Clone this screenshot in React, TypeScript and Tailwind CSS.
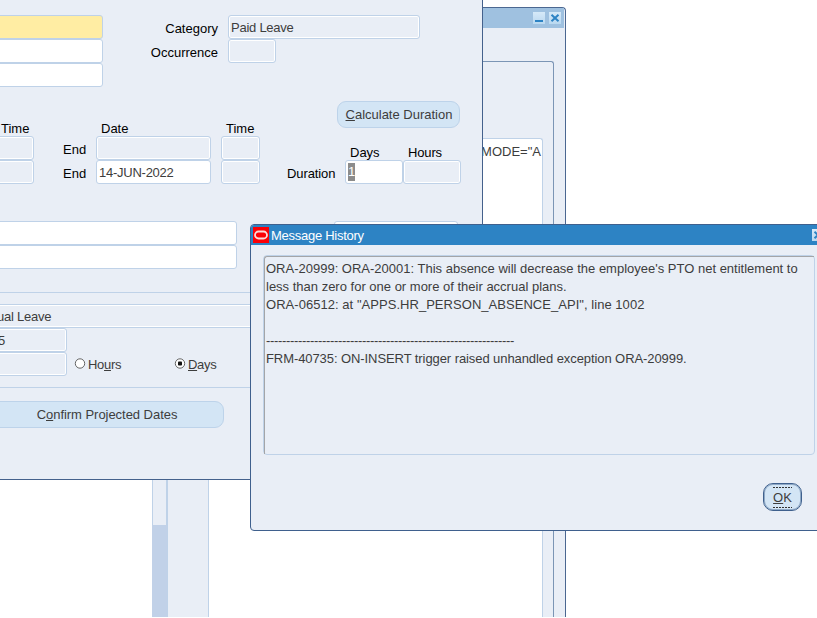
import type { ReactNode } from 'react';
import clsx from 'clsx';

interface FieldProps {
  className?: string;
  variant?: 'readonly' | 'editable' | 'required';
  children?: ReactNode;
}

const fieldStyles = {
  readonly: 'bg-[#e9eef6] shadow-[inset_0_0_0_1px_#fff]',
  editable: 'bg-white',
  required: 'bg-[#ffeda3]',
};

// Oracle Forms text item. Read only items show the canvas colour inside a white bevel.
function Field({ className, variant = 'readonly', children }: FieldProps) {
  return (
    <div
      className={clsx(
        'flex h-6 shrink-0 items-center rounded-[3px] border border-[#bfd2e8] pl-[2px] pt-px tracking-[-0.25px] text-[#3d3d3d]',
        fieldStyles[variant],
        className
      )}
    >
      {children}
    </div>
  );
}

function WindowButton({ type }: { type: 'minimize' | 'close' }) {
  return (
    <span className="flex h-3 w-3 shrink-0 items-center justify-center bg-gradient-to-b from-[#d6e9f8] to-[#b9d8f0]">
      <svg width="12" height="12" viewBox="0 0 12 12" fill="none" stroke="#2d83c4">
        {type === 'minimize' ? (
          <path d="M2 9h8" strokeWidth="2" />
        ) : (
          <path d="M2.5 2.8l7 6.4M9.5 2.8l-7 6.4M4.5 6h3" strokeWidth="2" />
        )}
      </svg>
    </span>
  );
}

function Radio({ checked = false }: { checked?: boolean }) {
  return (
    <svg width="11" height="11" viewBox="0.5 0.5 11 11" className="-ml-px mr-px shrink-0 overflow-visible">
      <circle cx="6.5" cy="6" r="4.7" fill="#fff" stroke="#555" strokeWidth="0.9" />
      {checked && <rect x="4.5" y="4" width="4" height="4" rx="0.8" fill="#111" />}
    </svg>
  );
}

function FocusLine() {
  return (
    <svg width="19" height="1" viewBox="0 0 19 1" className="block">
      <path d="M0 .5h19" stroke="#333" strokeDasharray="2 1" />
    </svg>
  );
}

function BackgroundWindow() {
  return (
    <div className="absolute left-0 top-[7px] flex h-[630px] w-[566px] flex-col rounded-tr-[4px] border-r border-t border-[#4b6791] bg-[#e9eef6]">
      <div className="mr-px flex h-5 shrink-0 items-center justify-end gap-1 bg-[#9fc1e0] pr-[3px]">
        <WindowButton type="minimize" />
        <WindowButton type="close" />
      </div>
      <div className="flex flex-1">
        <div className="w-[152px] bg-white" />
        <div className="flex w-4 flex-col border-l border-r-2 border-[#bfd2e8]">
          <div className="h-[497px]" />
          <div className="-mx-px flex-1 bg-[#c1d1e8]" />
        </div>
        <div className="mt-[33px] w-[386px] rounded-tr-[3px] border-r border-t border-[#7b95b5] pl-10 pr-[10px] pt-[76px]">
          <div className="h-full rounded-tr-[3px] border-l border-r border-t border-[#bfd2e8] bg-white pr-px pt-1 text-right leading-[18px] text-[#3d3d3d]">
            MODE="A
          </div>
        </div>
      </div>
    </div>
  );
}

function AbsenceForm() {
  return (
    <div className="absolute left-0 top-0 h-[480px] w-[483px] border-b border-r border-[#44618c] bg-[#e9eef6] pt-[15px] text-black">
      <div className="flex">
        <div className="-ml-1 w-[107px]">
          <Field variant="required" />
          <Field variant="editable" />
          <Field variant="editable" />
        </div>
        <div className="w-[115px] pt-[2px] text-right leading-6">
          <div>Category</div>
          <div>Occurrence</div>
        </div>
        <div className="ml-[10px]">
          <Field className="w-48">Paid Leave</Field>
          <Field className="w-12" />
        </div>
      </div>

      <div className="flex h-[97px]">
        <div className="-ml-1 w-[38px] pt-[33px]">
          <div className="h-4 pl-[5px] pt-px leading-4">Time</div>
          <Field />
          <Field />
        </div>
        <div className="ml-[29px] w-[33px] pt-[51px] leading-6">
          <div>End</div>
          <div>End</div>
        </div>
        <div className="w-[115px] pt-[33px]">
          <div className="h-4 pl-[5px] pt-px leading-4">Date</div>
          <Field />
          <Field variant="editable">14-JUN-2022</Field>
        </div>
        <div className="ml-[10px] w-[39px] pt-[33px]">
          <div className="h-4 pl-[5px] pt-px leading-4">Time</div>
          <Field />
          <Field />
        </div>
        <div className="ml-[27px] w-[58px] pt-[75px] leading-6 tracking-[-0.1px]">Duration</div>
        <div className="w-[124px] pt-[14px]">
          <button className="-ml-2 block h-[27px] w-[123px] rounded-[9px] border border-[#bdd3ea] bg-[#d3e5f5] pl-px leading-[25px] text-[#3d3d3d]">
            <u>C</u>alculate Duration
          </button>
          <div className="mt-4 flex h-4 pt-px leading-4">
            <span className="w-[58px] pl-[5px]">Days</span>
            <span className="pl-[5px] tracking-[-0.15px]">Hours</span>
          </div>
          <div className="flex">
            <Field className="w-[58px]" variant="editable">
              <span className="-mt-px h-[18px] w-[7px] bg-[#8c8c8c] leading-[18px] text-white">1</span>
            </Field>
            <Field className="w-[58px]" />
          </div>
        </div>
      </div>

      <div className="mt-[37px] flex">
        <div className="-ml-1 w-[241px]">
          <Field variant="editable" />
          <Field variant="editable" />
        </div>
        <Field className="ml-[97px] w-[124px]" variant="editable" />
      </div>

      <div className="mt-[23px] h-24 border-y border-[#bfd2e8] pt-[11px]">
        <Field className="-ml-1 w-[420px]">
          <span className="-ml-[2px]">ual Leave</span>
        </Field>
        <div className="flex">
          <div className="-ml-1 w-[71px]">
            <Field>
              <span className="-ml-px">5</span>
            </Field>
            <Field />
          </div>
          <div className="flex gap-[54px] pl-2 pt-[30px] leading-[14px] tracking-[-0.3px] text-[#3d3d3d]">
            <div className="flex w-[46px] gap-[2px]">
              <Radio />
              <span>
                Ho<u>u</u>rs
              </span>
            </div>
            <div className="flex gap-[2px]">
              <Radio checked />
              <span>
                <u>D</u>ays
              </span>
            </div>
          </div>
        </div>
      </div>

      <button className="-ml-[10px] mt-[13px] block h-[27px] w-[234px] rounded-[9px] border border-[#bdd3ea] bg-[#d3e5f5] leading-[25px] tracking-[-0.04px] text-[#3d3d3d]">
        C<u>o</u>nfirm Projected Dates
      </button>
    </div>
  );
}

const messageLines = [
  { text: "ORA-20999: ORA-20001: This absence will decrease the employee's PTO net entitlement to" },
  { text: 'less than zero for one or more of their accrual plans.' },
  { text: 'ORA-06512: at "APPS.HR_PERSON_ABSENCE_API", line 1002', tracking: 'tracking-[0.04px]' },
  { text: '' },
  { text: '--------------------------------------------------------------', tracking: 'tracking-[-0.33px]' },
  { text: 'FRM-40735: ON-INSERT trigger raised unhandled exception ORA-20999.', tracking: 'tracking-[-0.08px]' },
];

function MessageHistoryDialog() {
  return (
    <div className="absolute left-[250px] top-[224px] flex h-[307px] w-[580px] flex-col rounded-l-[4px] border border-[#3f608d] bg-[#e9eef6]">
      <div className="flex h-5 shrink-0 items-center rounded-tl-[3px] bg-[#2d83c4] pl-[2px] pr-[5px] text-white">
        <svg width="16" height="16" viewBox="0 0 16 16">
          <rect width="16" height="16" fill="#fb0007" />
          <rect x="2" y="4.5" width="12" height="7" rx="3.5" fill="none" stroke="#fbd9d9" strokeWidth="1.8" />
        </svg>
        <span className="flex-1 pl-[2px] pt-[2px] leading-5 tracking-[-0.27px]">Message History</span>
        <WindowButton type="close" />
      </div>
      <div className="ml-3 mt-[10px] h-[200px] w-[552px] rounded-[4px] border border-[#bfd2e8]">
        <div className="h-full rounded-tl-[3px] border-l border-t border-[#a3a5a8] pl-px pt-[3px] leading-[18px] text-[#3d3d3d]">
          {messageLines.map((line, i) => (
            <div key={i} className={clsx('h-[18px] whitespace-nowrap', line.tracking)}>
              {line.text}
            </div>
          ))}
        </div>
      </div>
      <button className="ml-[512px] mt-7 flex h-7 w-[39px] flex-col items-center justify-center rounded-[10px] border border-[#3f608d] bg-[#d3e5f5] text-[#3d3d3d] shadow-[inset_0_0_0_1px_#8fa9c6]">
        <FocusLine />
        <span className="h-[19px] leading-[19px]">
          <u>O</u>K
        </span>
        <FocusLine />
      </button>
    </div>
  );
}

export default function App() {
  return (
    <div className="relative h-[617px] w-[817px] overflow-hidden bg-white font-['Liberation_Sans',Arial,sans-serif] text-[13px] leading-[18px]">
      <BackgroundWindow />
      <AbsenceForm />
      <MessageHistoryDialog />
    </div>
  );
}
